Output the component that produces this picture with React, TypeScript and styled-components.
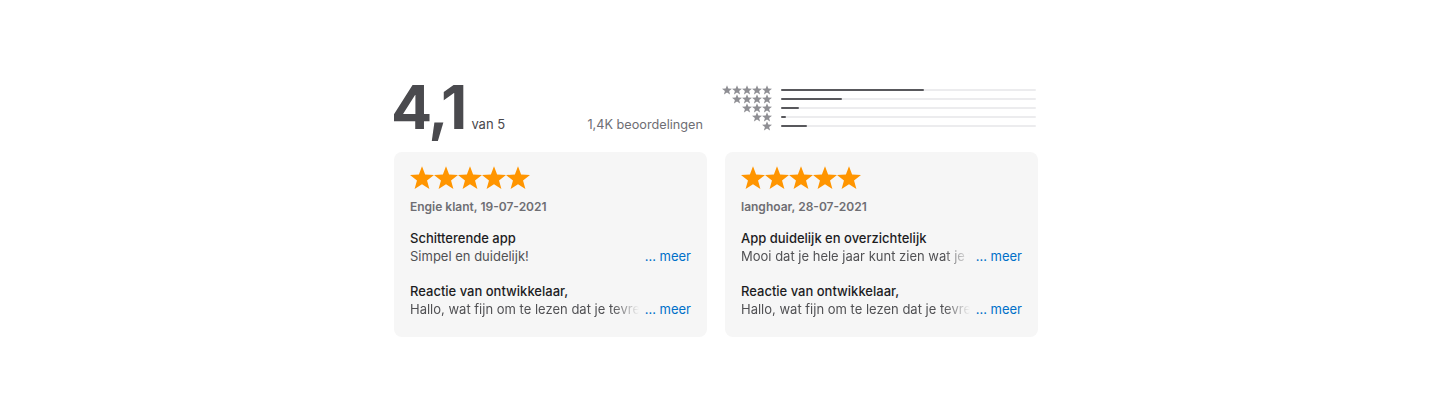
import React from "react";
import styled, { createGlobalStyle } from "styled-components";

const Global = createGlobalStyle`
  html, body { margin: 0; padding: 0; background: #fff; }
  body { font-family: Inter, "Noto Sans", "Liberation Sans", sans-serif; -webkit-font-smoothing: antialiased; }
`;

const Page = styled.div`
  display: flex;
  justify-content: center;
  padding: 76px 8px 0 0;
`;

const Section = styled.section`
  width: 644px;
  display: grid;
  grid-template-columns: 313px 313px;
  column-gap: 18px;
  row-gap: 14px;
`;

const Summary = styled.div`
  display: flex;
  align-items: baseline;
`;

const Score = styled.span`
  font-size: 61px;
  line-height: 62px;
  font-weight: 700;
  letter-spacing: -2px;
  color: #4a4a4e;
  margin-left: -3px;
`;

const OutOf = styled.span`
  font-size: 13px;
  color: #48484c;
  margin-left: 6px;
`;

const Count = styled.span`
  font-size: 12.7px;
  color: #6e6e73;
  margin-left: auto;
  margin-right: 4px;
`;

const Histogram = styled.div`
  display: grid;
  grid-template-columns: 50px 1fr;
  column-gap: 9px;
  align-content: end;
  padding: 0 2px 8px 0;
  margin-left: -3px;
`;

const StarCell = styled.div`
  display: flex;
  justify-content: flex-end;
  height: 9px;
  align-items: center;
`;

const Track = styled.div`
  height: 9px;
  display: flex;
  align-items: center;
  position: relative;
  &::before {
    content: "";
    position: absolute;
    left: 0;
    right: 0;
    height: 2px;
    background: #ececee;
    border-radius: 1px;
  }
`;

const Fill = styled.div`
  position: relative;
  height: 2px;
  background: #58585c;
  border-radius: 1px;
`;

const Card = styled.article`
  background: #f6f6f6;
  border-radius: 8px;
  padding: 14px 16px 19px;
  display: flex;
  flex-direction: column;
`;

const Stars = styled.div`
  display: flex;
  height: 24px;
`;

const Author = styled.div`
  margin-top: 9px;
  font-size: 12px;
  line-height: 16px;
  font-weight: 600;
  color: #6e6e73;
`;

const Block = styled.div<{ $gap: number }>`
  margin-top: ${(p) => p.$gap}px;
  display: flex;
  flex-direction: column;
`;

const Title = styled.div`
  font-size: 13px;
  line-height: 18px;
  font-weight: 500;
  color: #1d1d1f;
`;

const BodyRow = styled.div`
  display: flex;
  align-items: baseline;
  font-size: 13px;
  line-height: 18px;
`;

const BodyText = styled.div<{ $fade: boolean }>`
  flex: 1;
  min-width: 0;
  white-space: nowrap;
  overflow: hidden;
  color: #515154;
  ${(p) =>
    p.$fade
      ? `-webkit-mask-image: linear-gradient(to right, #000 calc(100% - 28px), transparent calc(100% - 2px));
         mask-image: linear-gradient(to right, #000 calc(100% - 28px), transparent calc(100% - 2px));`
      : ""}
`;

const More = styled.a`
  color: #0070c9;
  text-decoration: none;
  margin-left: 4px;
  white-space: nowrap;
`;

const STAR =
  "M12 0.3L15.12 8.61L23.98 9.01L17.04 14.54L19.41 23.09L12 18.2L4.59 23.09L6.96 14.54L0.02 9.01L8.88 8.61Z";

function Star({ size, color }: { size: number; color: string }) {
  return (
    <svg width={size} height={size} viewBox="0 0 24 24" style={{ flex: "none" }}>
      <path d={STAR} fill={color} />
    </svg>
  );
}

const dist = [56, 24, 7, 2, 10];

type Review = {
  author: string;
  title: string;
  body: string;
  fade: boolean;
};

const reviews: Review[] = [
  { author: "Engie klant, 19-07-2021", title: "Schitterende app", body: "Simpel en duidelijk!", fade: false },
  {
    author: "langhoar, 28-07-2021",
    title: "App duidelijk en overzichtelijk",
    body: "Mooi dat je hele jaar kunt zien wat je totaal verbruikt hebt",
    fade: true,
  },
];

const reply = "Hallo, wat fijn om te lezen dat je tevreden bent met onze app";

export default function App() {
  return (
    <>
      <Global />
      <Page>
        <Section>
          <Summary>
            <Score>4,1</Score>
            <OutOf>van 5</OutOf>
            <Count>1,4K beoordelingen</Count>
          </Summary>
          <Histogram>
            {dist.map((pct, i) => (
              <React.Fragment key={i}>
                <StarCell>
                  {Array.from({ length: 5 - i }).map((_, j) => (
                    <Star key={j} size={10} color="#8e8e93" />
                  ))}
                </StarCell>
                <Track>
                  <Fill style={{ width: `${pct}%` }} />
                </Track>
              </React.Fragment>
            ))}
          </Histogram>
          {reviews.map((r) => (
            <Card key={r.author}>
              <Stars>
                {Array.from({ length: 5 }).map((_, j) => (
                  <Star key={j} size={24} color="#ff9500" />
                ))}
              </Stars>
              <Author>{r.author}</Author>
              <Block $gap={14}>
                <Title>{r.title}</Title>
                <BodyRow>
                  <BodyText $fade={r.fade}>{r.body}</BodyText>
                  <More href="#">… meer</More>
                </BodyRow>
              </Block>
              <Block $gap={17}>
                <Title>Reactie van ontwikkelaar,</Title>
                <BodyRow>
                  <BodyText $fade>{reply}</BodyText>
                  <More href="#">… meer</More>
                </BodyRow>
              </Block>
            </Card>
          ))}
        </Section>
      </Page>
    </>
  );
}
